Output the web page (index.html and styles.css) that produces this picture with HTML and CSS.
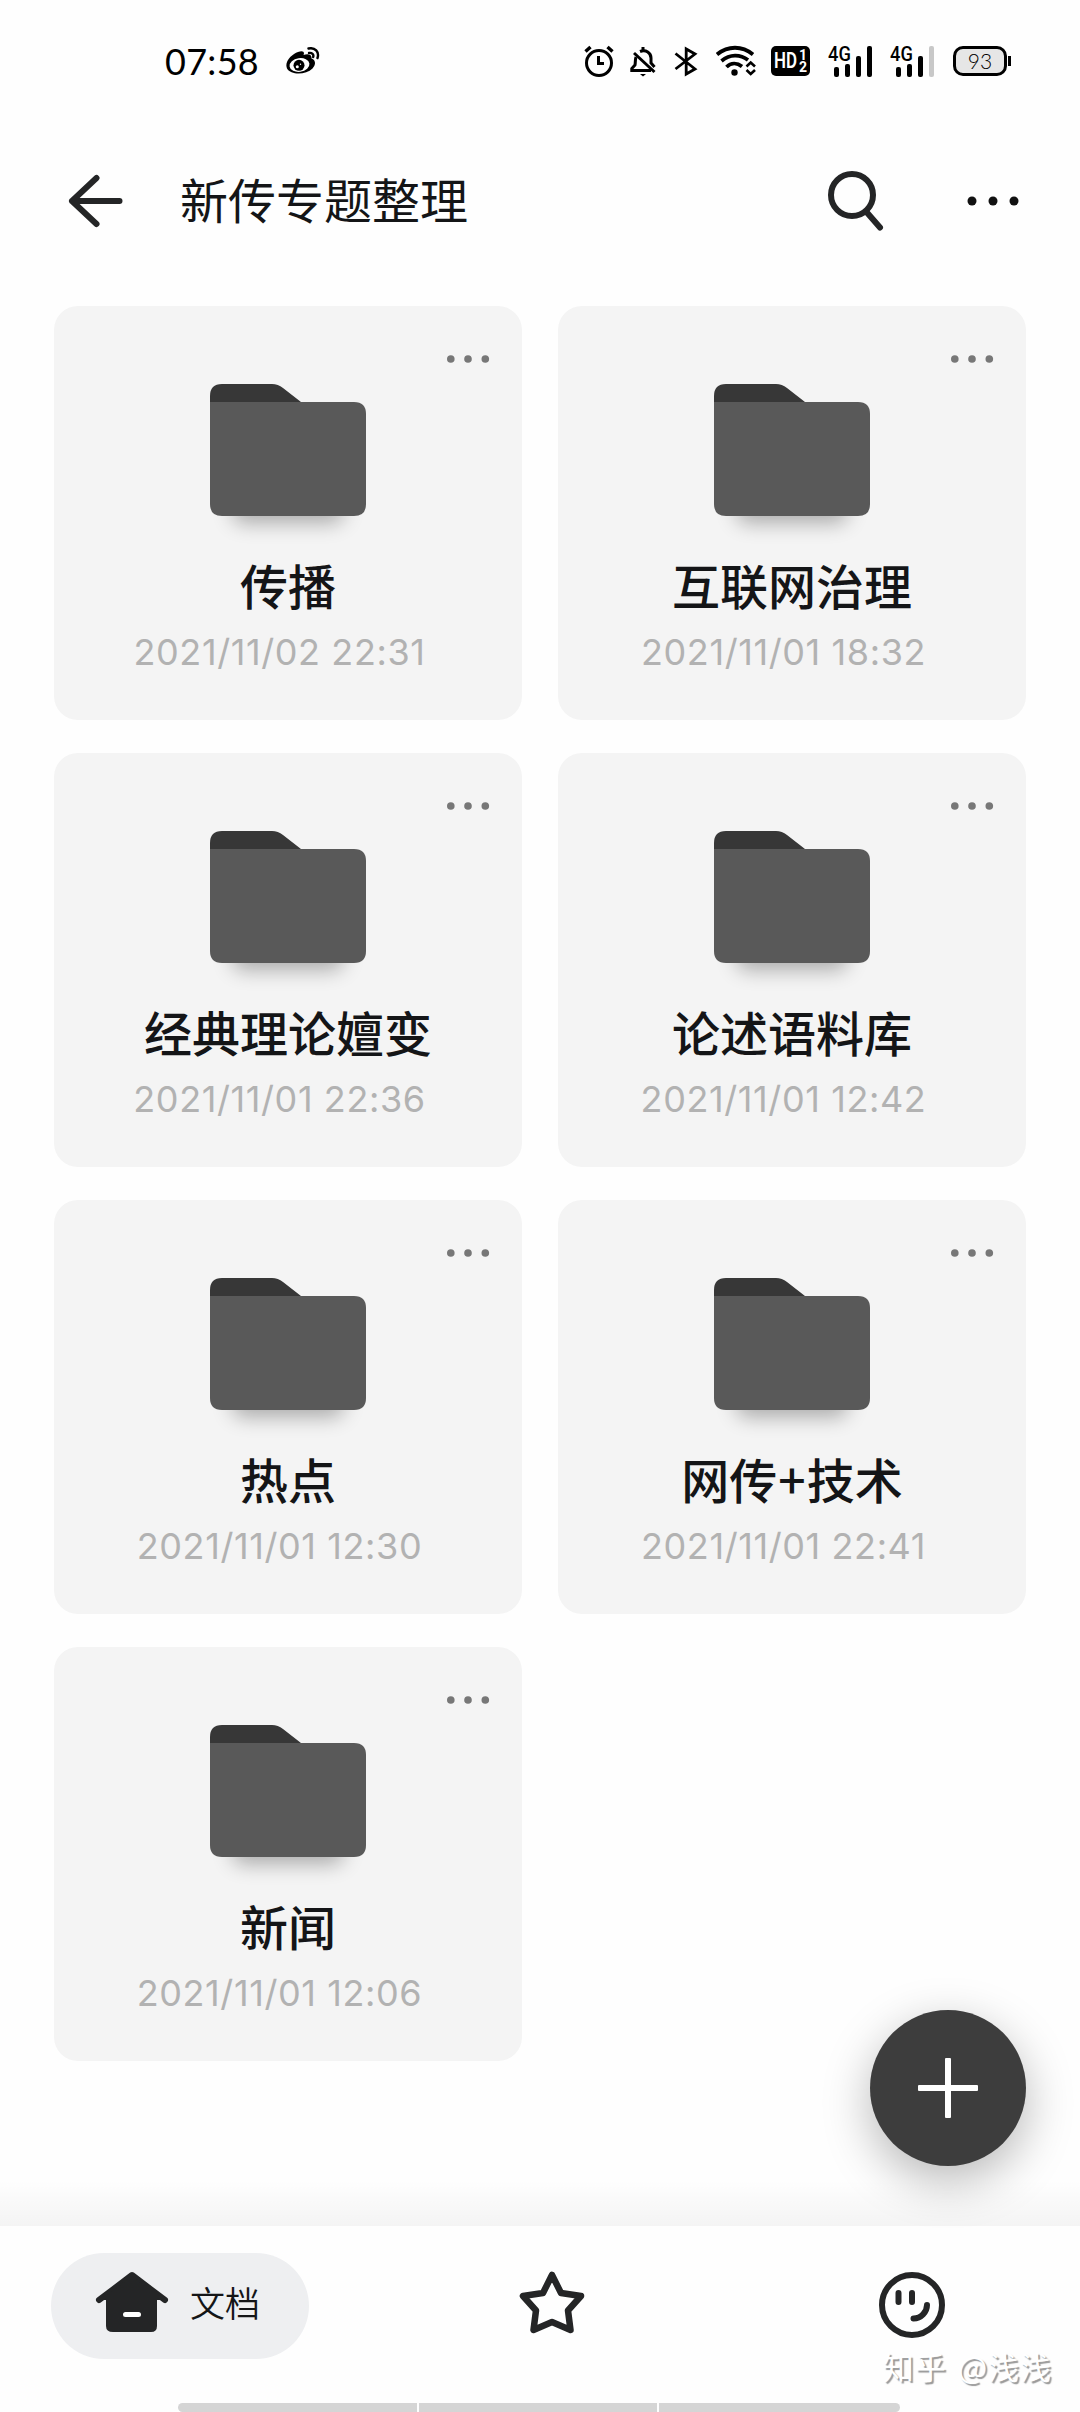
FILE: index.html
```html
<!DOCTYPE html>
<html lang="zh-CN">
<head>
    <meta charset="UTF-8">
    <meta name="viewport" content="width=device-width, initial-scale=1.0">
    <title>新传专题整理</title>
    <link rel="stylesheet" href="styles.css">
</head>
<body>

<!-- shared shapes -->
<svg class="defs" width="0" height="0">
    <symbol id="folder" viewBox="0 0 156 132">
        <path fill="#373737" d="M0 30V12Q0 0 12 0H62Q68 0 73 4L91 18V30Z"/>
        <path fill="#595959" d="M0 18H144Q156 18 156 30V120Q156 132 144 132H12Q0 132 0 120Z"/>
    </symbol>
    <symbol id="dots" viewBox="0 0 44 10">
        <circle cx="4.8" cy="5" r="3.8"/>
        <circle cx="22" cy="5" r="3.8"/>
        <circle cx="39.3" cy="5" r="3.8"/>
    </symbol>
</svg>

<div class="screen">
    <div class="status">
        <span class="time">07:58</span>
        <svg class="weibo" width="34" height="28" viewBox="0 0 34 28">
            <path fill="#000" d="M12 5C17 3 19 5 17.500 8C22 6.500 26 7.500 25.500 11.500C30 13 30 18 26.500 21.500C20 28 5 28.500 1 21.500C-2 14.500 6 7 12 5Z"/>
            <ellipse cx="13.500" cy="18" rx="10" ry="6.800" fill="#fff" transform="rotate(-8 13.500 18)"/>
            <circle cx="13" cy="18.300" r="5.500" fill="#000"/>
            <circle cx="11.300" cy="19.800" r="1.500" fill="#fff"/>
            <circle cx="14.500" cy="17.300" r=".7" fill="#fff"/>
            <path d="M22.500 1.500C29 0 33.500 5 31.500 11M23 6C26 5.500 28 7.500 27.200 10" fill="none" stroke="#000" stroke-width="2.400" stroke-linecap="round"/>
        </svg>
        <div class="status-icons">
            <svg class="alarm" width="30" height="32" viewBox="0 0 30 32" fill="none" stroke="#000" stroke-width="3">
                <circle cx="15" cy="18" r="12.500"/>
                <path d="M14.500 11V18.500H20"/>
                <path d="M1.500 6.500L6.500 2M28.500 6.500L23.500 2" stroke-width="3.400"/>
            </svg>
            <svg class="bell" width="26" height="31" viewBox="0 0 26 31" fill="none" stroke="#000" stroke-width="3">
                <path d="M4 7L24.500 26"/>
                <path d="M10 5.500C16 3 21 7 21 12V17L24.500 21"/>
                <path d="M6 11C5 14 5.500 17 5 19L1.800 22.500V24.500H21"/>
                <path d="M13 1V5"/>
                <path d="M10 28H16L13 30.500Z" fill="#000" stroke="none"/>
            </svg>
            <svg class="bt" width="24" height="31" viewBox="0 0 24 31" fill="none" stroke="#000" stroke-width="2.800">
                <path d="M1.500 7.500L21 23L12.200 28V3L21 8L1.500 23"/>
            </svg>
            <svg class="wifi" width="40" height="32" viewBox="0 0 40 32" fill="none" stroke="#000" stroke-width="3.800">
                <path d="M1 9.500C12 .5 26 .5 37 9.500M5.500 16C14 9 24 9 32 15M10.500 22C15 17.500 21 17.500 26 21.500"/>
                <circle cx="18.500" cy="27.500" r="3.200" fill="#000" stroke="none"/>
                <path d="M30.500 21.500L34.700 17.500L39 21.500M30.500 25L34.700 29L39 25" stroke-width="2.600"/>
            </svg>
            <div class="hd"><b>HD</b><span class="hd-num"><i>1</i><i>2</i></span></div>
            <div class="signal sig1">
                <span>4G</span>
                <svg width="39" height="31" viewBox="0 0 39 31">
                    <rect x="0" y="21" width="5" height="10" rx="2"/>
                    <rect x="11" y="18" width="5" height="13" rx="2"/>
                    <rect x="22" y="10" width="5" height="21" rx="2"/>
                    <rect x="33" y="0" width="5" height="31" rx="2"/>
                </svg>
            </div>
            <div class="signal sig2">
                <span>4G</span>
                <svg width="39" height="31" viewBox="0 0 39 31">
                    <rect x="0" y="21" width="5" height="10" rx="2"/>
                    <rect x="11" y="18" width="5" height="13" rx="2"/>
                    <rect x="22" y="10" width="5" height="21" rx="2"/>
                    <rect x="33" y="0" width="5" height="31" rx="2" fill="#c8c8c8"/>
                </svg>
            </div>
            <div class="battery">93</div>
            <div class="battery-tip"></div>
        </div>
    </div>

    <header class="header">
        <svg class="back" width="56" height="54" viewBox="0 0 56 54" fill="none" stroke="#242526" stroke-width="6" stroke-linecap="round" stroke-linejoin="round">
            <path d="M28.500 4L4 27L28.500 50M4 27H51.500"/>
        </svg>
        <h1>新传专题整理</h1>
        <svg class="search" width="58" height="62" viewBox="0 0 58 62" fill="none" stroke="#242526" stroke-width="6">
            <circle cx="25" cy="25" r="21"/>
            <path d="M39.500 42L53 57.500" stroke-linecap="round"/>
        </svg>
        <svg class="more" width="52" height="10" viewBox="0 0 52 10" fill="#111">
            <circle cx="5" cy="5" r="4.500"/>
            <circle cx="26" cy="5" r="4.500"/>
            <circle cx="47" cy="5" r="4.500"/>
        </svg>
    </header>

    <main class="grid">
        <div class="card">
            <svg class="card-more"><use href="#dots"/></svg>
            <div class="folder"><svg><use href="#folder"/></svg></div>
            <h2>传播</h2>
            <p>2021/11/02 22:31</p>
        </div>
        <div class="card">
            <svg class="card-more"><use href="#dots"/></svg>
            <div class="folder"><svg><use href="#folder"/></svg></div>
            <h2>互联网治理</h2>
            <p>2021/11/01 18:32</p>
        </div>
        <div class="card">
            <svg class="card-more"><use href="#dots"/></svg>
            <div class="folder"><svg><use href="#folder"/></svg></div>
            <h2>经典理论嬗变</h2>
            <p>2021/11/01 22:36</p>
        </div>
        <div class="card">
            <svg class="card-more"><use href="#dots"/></svg>
            <div class="folder"><svg><use href="#folder"/></svg></div>
            <h2>论述语料库</h2>
            <p>2021/11/01 12:42</p>
        </div>
        <div class="card">
            <svg class="card-more"><use href="#dots"/></svg>
            <div class="folder"><svg><use href="#folder"/></svg></div>
            <h2>热点</h2>
            <p>2021/11/01 12:30</p>
        </div>
        <div class="card">
            <svg class="card-more"><use href="#dots"/></svg>
            <div class="folder"><svg><use href="#folder"/></svg></div>
            <h2>网传<span class="plus">+</span>技术</h2>
            <p>2021/11/01 22:41</p>
        </div>
        <div class="card">
            <svg class="card-more"><use href="#dots"/></svg>
            <div class="folder"><svg><use href="#folder"/></svg></div>
            <h2>新闻</h2>
            <p>2021/11/01 12:06</p>
        </div>
    </main>

    <div class="fade"></div>

    <nav class="tabs">
        <div class="tab-active">
            <svg width="74" height="62" viewBox="0 0 74 62">
                <path d="M4 29L37 4L70 29" fill="#242526" stroke="#242526" stroke-width="6" stroke-linecap="round" stroke-linejoin="round"/>
                <path d="M12 24L37 5L62 24V55Q62 61 56 61H18Q11 61 11 55V24Z" fill="#242526"/>
                <rect x="28" y="41" width="18" height="5" rx="2.500" fill="#fff"/>
            </svg>
            <span>文档</span>
        </div>
        <svg class="star" width="66" height="64" viewBox="0 0 66 64" fill="none" stroke="#242526" stroke-width="6.500" stroke-linejoin="round">
            <path d="M33 4L42 22L62 25L49 39.500L51.500 59L33 51L14.500 59L17 39.500L4 25L24 22Z"/>
        </svg>
        <svg class="face" width="66" height="66" viewBox="0 0 66 66" fill="none" stroke="#242526" stroke-width="6" stroke-linecap="round">
            <circle cx="33" cy="33" r="30"/>
            <path d="M19.500 21V30M33 21V30M48 33C48 40 42 46.500 34.500 46.500"/>
        </svg>
    </nav>

    <div class="gesture"><i></i><i></i><i></i></div>

    <button class="fab">
        <svg width="60" height="60" viewBox="0 0 60 60" fill="#fff">
            <rect x="27" y="0" width="6" height="60" rx="1"/>
            <rect x="0" y="27" width="60" height="6" rx="1"/>
        </svg>
    </button>
    <div class="watermark">知乎 @浅浅</div>
</div>

</body>
</html>
```
FILE: styles.css
```css
* {
    box-sizing: border-box;
}
body {
    margin: 0;
    background: #fefefe;
    font-family: "Noto Sans CJK SC", sans-serif;
    color: #141517;
}
h1, h2, p {
    margin: 0;
}
svg {
    display: block;
    flex: none;
}
.defs {
    position: absolute;
}
.screen {
    position: relative;
    width: 1080px;
    height: 2412px;
    overflow: hidden;
    display: flex;
    flex-direction: column;
}

/* status bar */
.status {
    display: flex;
    align-items: center;
    height: 122px;
    padding: 0 69px 0 165px;
    color: #000;
}
.time {
    width: 121px;
    font: 36px/40px Lato, sans-serif;
    letter-spacing: 0.3px;
}
.status-icons {
    display: flex;
    align-items: center;
    margin-left: auto;
}
.bell {
    margin-left: 16px;
}
.bt {
    margin-left: 18px;
}
.wifi {
    margin-left: 18px;
}
.hd {
    display: flex;
    align-items: center;
    width: 39px;
    height: 30px;
    padding-left: 3px;
    margin-left: 15px;
    background: #000;
    border-radius: 5px;
    color: #fff;
    font: 22px/30px Roboto, sans-serif;
}
.hd b {
    width: 25px;
    font-weight: 600;
    transform: scaleX(0.77);
    transform-origin: left;
}
.hd-num {
    display: flex;
    flex-direction: column;
    font: bold 14px/12px Roboto, sans-serif;
}
.hd-num i {
    font-style: normal;
}
.signal {
    position: relative;
    width: 44px;
    height: 31px;
    padding-left: 5px;
}
.signal span {
    position: absolute;
    left: -1px;
    top: -2px;
    font: 500 21px/20px Roboto, sans-serif;
    transform: scaleX(0.87);
    transform-origin: left;
}
.sig1 {
    margin-left: 19px;
}
.sig2 {
    margin-left: 18px;
}
.battery {
    width: 54px;
    height: 30px;
    margin-left: 18px;
    border: 3px solid #000;
    border-radius: 10px;
    background: #e6e6e6;
    text-align: center;
    font: 300 21px/24px Lato, sans-serif;
}
.battery-tip {
    width: 3px;
    height: 10px;
    margin-left: 1px;
    background: #000;
}

/* title bar */
.header {
    display: flex;
    align-items: center;
    height: 158px;
    padding: 0 61px 0 68px;
}
h1 {
    margin: -7px 0 0 56px;
    font-size: 48px;
    font-weight: 400;
    line-height: 70px;
}
.search {
    margin-left: auto;
}
.more {
    margin-left: 82px;
}

/* folder cards */
.grid {
    display: grid;
    grid-template-columns: 468px 468px;
    grid-auto-rows: 414px;
    gap: 33px 36px;
    padding: 26px 54px 0;
}
.card {
    position: relative;
    display: flex;
    flex-direction: column;
    align-items: center;
    padding-top: 78px;
    background: #f4f4f4;
    border-radius: 24px;
}
.card-more {
    position: absolute;
    top: 48px;
    right: 32px;
    width: 44px;
    height: 10px;
    fill: #777;
}
.folder {
    position: relative;
    width: 156px;
    height: 132px;
}
.folder::before {
    content: "";
    position: absolute;
    left: 22px;
    right: 22px;
    bottom: 0;
    height: 30px;
    border-radius: 12px;
    box-shadow: 0 7px 20px rgba(0, 0, 0, 0.3);
}
.folder svg {
    position: relative;
    width: 156px;
    height: 132px;
}
.card h2 {
    margin-top: 33px;
    font-size: 48px;
    font-weight: 500;
    line-height: 70px;
}
.plus {
    padding: 0 1px;
}
.card p {
    margin-top: 11px;
    padding-right: 17px;
    color: #b2b2b2;
    font: 36px/44px Inter, sans-serif;
    letter-spacing: 0.6px;
    white-space: nowrap;
}

/* bottom */
.fade {
    height: 46px;
    margin-top: auto;
    background: linear-gradient(rgba(0, 0, 0, 0), rgba(0, 0, 0, 0.04));
}
.tabs {
    display: flex;
    align-items: center;
    height: 177px;
    padding: 0 135px 18px 51px;
}
.tab-active {
    display: flex;
    align-items: center;
    width: 258px;
    height: 106px;
    padding: 0 0 7px 44px;
    border-radius: 53px;
    background: #eeeff1;
}
.tab-active span {
    margin-left: 21px;
    font-size: 35px;
    font-weight: 350;
    line-height: 50px;
}
.star {
    margin: -6px 0 0 210px;
}
.face {
    margin: -1px 0 0 auto;
}
.gesture {
    display: grid;
    grid-template-columns: 239px 238px 241px;
    gap: 2px;
    width: 722px;
    height: 9px;
    margin-left: 178px;
}
.gesture i {
    background: #d5d5d5;
}
.gesture i:first-child {
    border-radius: 5px 0 0 5px;
}
.gesture i:last-child {
    border-radius: 0 5px 5px 0;
}
.fab {
    position: absolute;
    left: 870px;
    top: 2010px;
    display: flex;
    align-items: center;
    justify-content: center;
    width: 156px;
    height: 156px;
    padding: 0;
    border: 0;
    border-radius: 50%;
    background: #3d3d3d;
    box-shadow: 0 15px 48px rgba(0, 0, 0, 0.28);
}
.watermark {
    position: absolute;
    right: 28px;
    top: 2343px;
    color: #fff;
    font-size: 31px;
    line-height: 46px;
    letter-spacing: 1px;
    word-spacing: 3px;
    text-shadow: 2px 2px 1px #999;
}
```
